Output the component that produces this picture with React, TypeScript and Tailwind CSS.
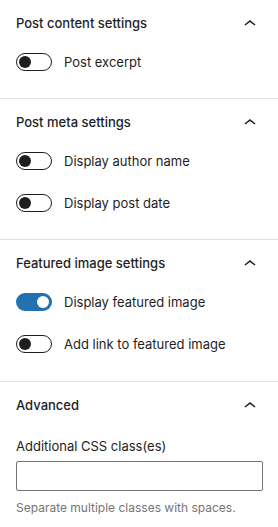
import React from "react";

const font = { fontFamily: "Inter, 'Noto Sans', 'Liberation Sans', sans-serif" };

function Chevron() {
  return (
    <svg width="24" height="24" viewBox="0 0 24 24" className="shrink-0">
      <path d="M6.5 12.4L12 8l5.5 4.4-.9 1.2L12 10l-4.6 3.6-1-1.2z" fill="#1e1e1e" />
    </svg>
  );
}

function Toggle({ on, label }: { on?: boolean; label: string }) {
  return (
    <div className="flex items-center gap-3 h-[18px]">
      {on ? (
        <div className="relative w-[36px] h-[18px] rounded-full bg-[#2271b1] shrink-0">
          <div className="absolute right-[3px] top-[3px] w-[12px] h-[12px] rounded-full bg-white" />
        </div>
      ) : (
        <div className="relative w-[36px] h-[18px] rounded-full border border-[#1e1e1e] bg-white shrink-0">
          <div className="absolute left-[2px] top-[2px] w-[12px] h-[12px] rounded-full bg-[#1e1e1e]" />
        </div>
      )}
      <span className="text-[13px] leading-[18px] text-[#1e1e1e]">{label}</span>
    </div>
  );
}

function Header({ title }: { title: string }) {
  return (
    <div className="h-[48px] flex items-center justify-between pl-4 pr-4">
      <span className="text-[13px] font-medium text-[#1e1e1e]">{title}</span>
      <Chevron />
    </div>
  );
}

export default function App() {
  return (
    <div className="w-[278px] bg-white" style={font}>
      <div className="border-b border-[#e0e0e0]">
        <Header title="Post content settings" />
        <div className="px-4 pt-[5px] pb-[27px] flex flex-col gap-6">
          <Toggle label="Post excerpt" />
        </div>
      </div>
      <div className="border-b border-[#e0e0e0]">
        <Header title="Post meta settings" />
        <div className="px-4 pt-[5px] pb-[27px] flex flex-col gap-6">
          <Toggle label="Display author name" />
          <Toggle label="Display post date" />
        </div>
      </div>
      <div className="border-b border-[#e0e0e0]">
        <Header title="Featured image settings" />
        <div className="px-4 pt-[5px] pb-[28px] flex flex-col gap-6">
          <Toggle on label="Display featured image" />
          <Toggle label="Add link to featured image" />
        </div>
      </div>
      <div>
        <Header title="Advanced" />
        <div className="px-4 pt-[6px] pb-4 flex flex-col">
          <label className="text-[13px] leading-[20px] text-[#1e1e1e]">Additional CSS class(es)</label>
          <input
            type="text"
            className="mt-[5px] w-[247px] h-[30px] border border-[#757575] rounded-[2px] px-2 text-[13px] outline-none"
          />
          <p className="mt-[9px] text-[12px] leading-[16px] text-[#757575]">
            Separate multiple classes with spaces.
          </p>
        </div>
      </div>
    </div>
  );
}
